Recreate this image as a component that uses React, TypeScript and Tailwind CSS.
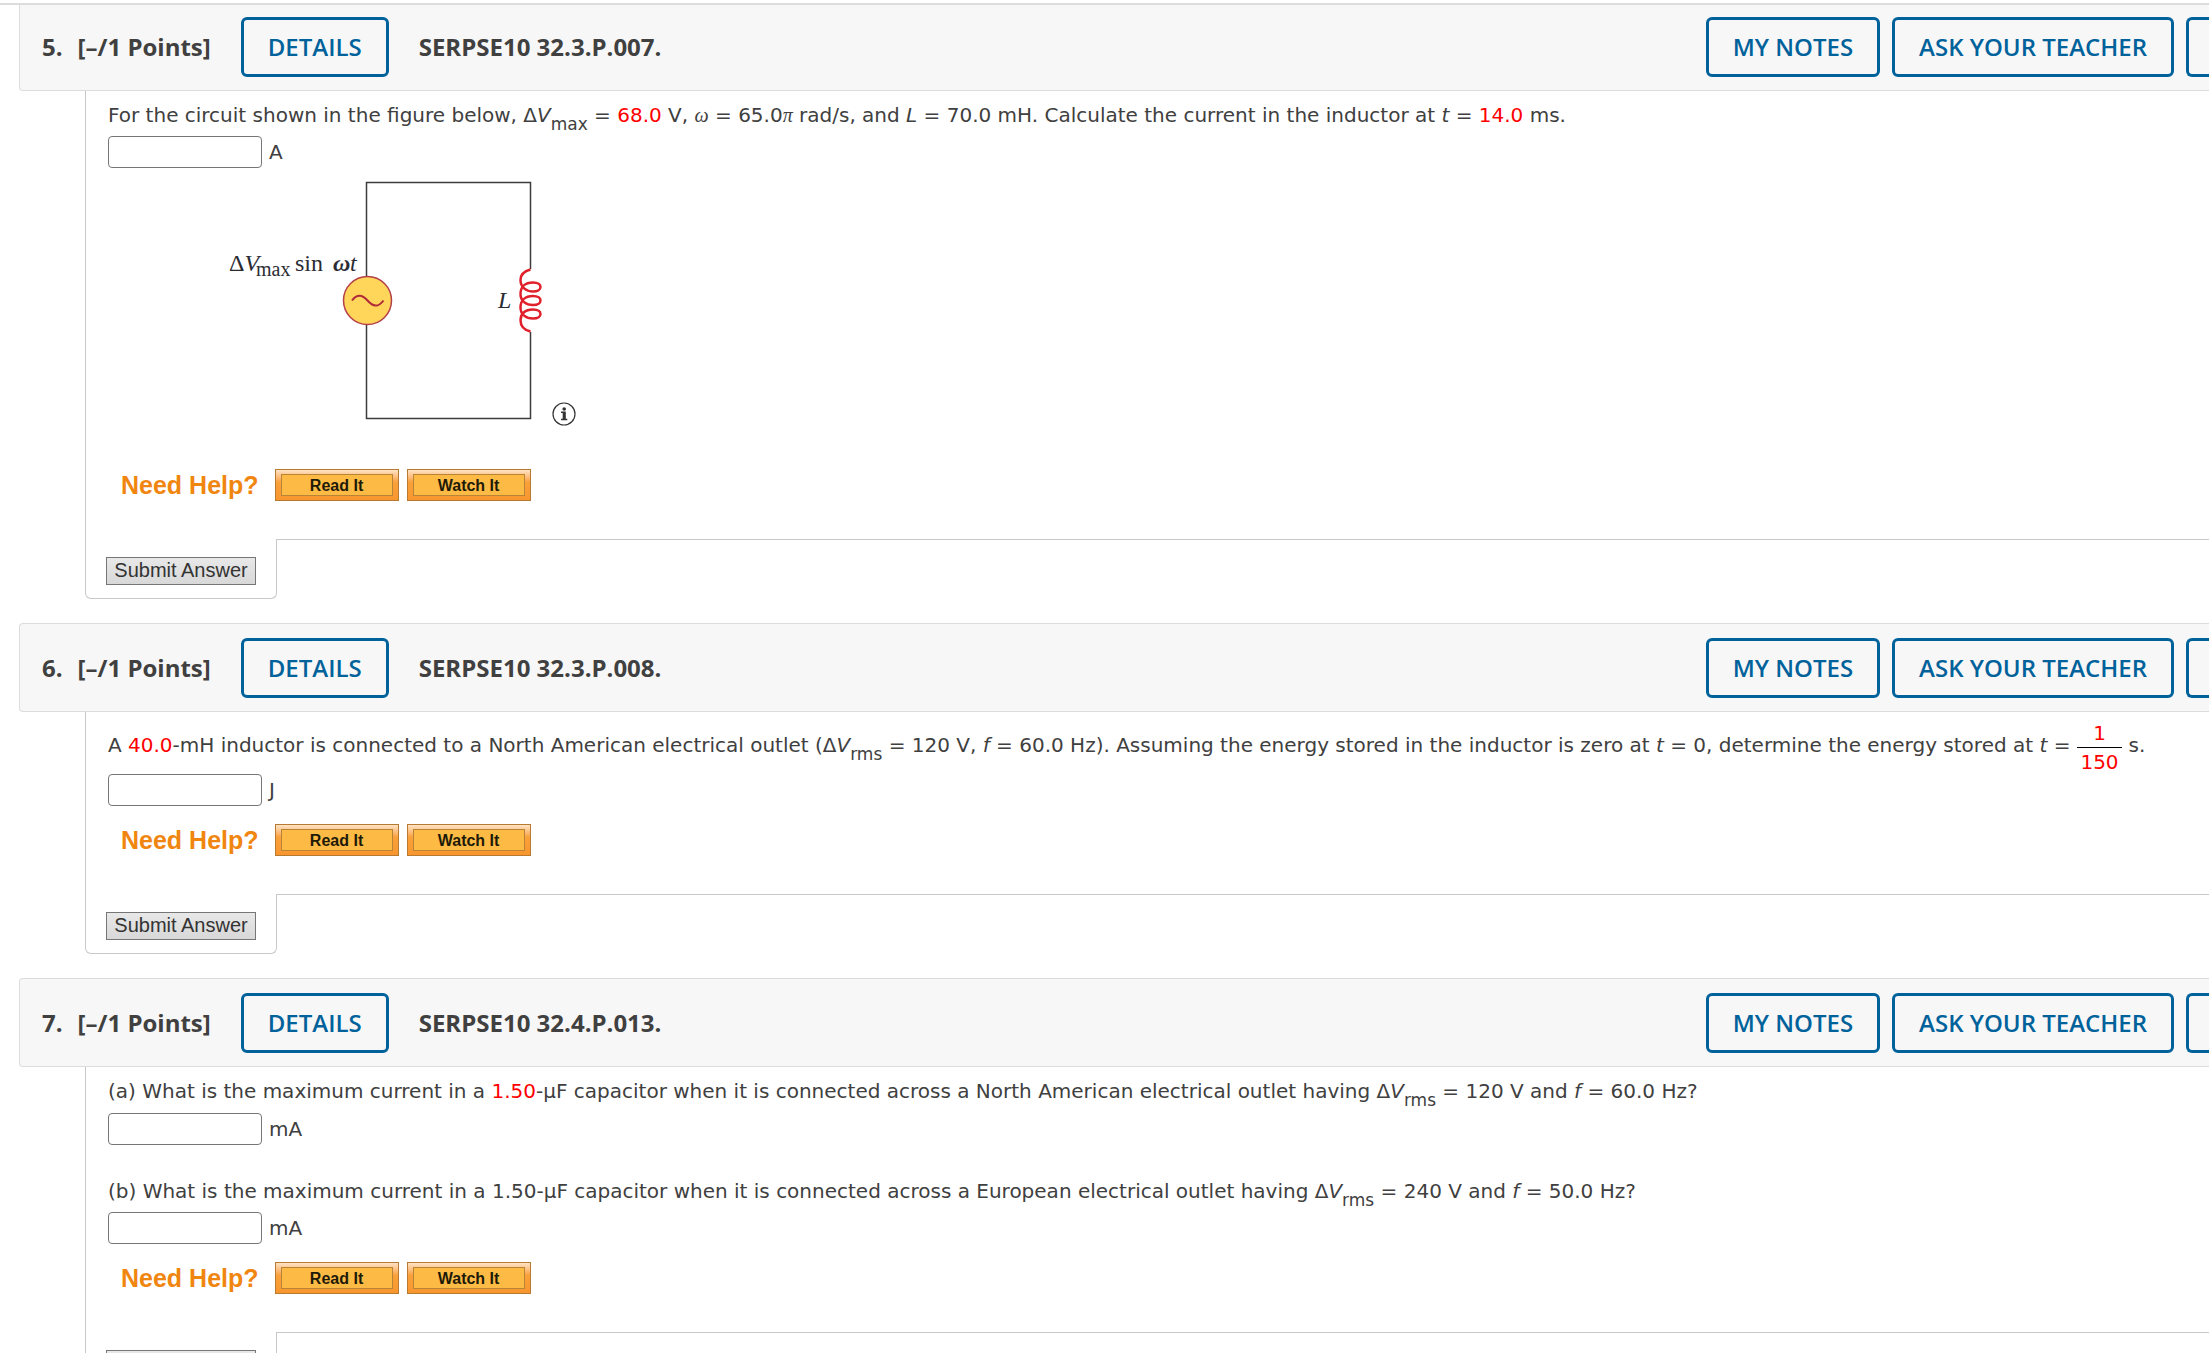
import type { ReactNode } from "react";

interface Question {
  number: number;
  code: string;
  body: ReactNode;
}

const actionClass =
  "h-[60px] rounded-md border-3 border-[#00629b] px-6 font-['Open_Sans',sans-serif] text-[24px] font-semibold text-[#00629b] whitespace-nowrap";

function Red({ children }: { children: ReactNode }) {
  return <span className="text-[#ff0000]">{children}</span>;
}

function Greek({ children }: { children: ReactNode }) {
  return (
    <i className="font-['Liberation_Serif',serif] text-[20px]">{children}</i>
  );
}

function DeltaV({ sub }: { sub: string }) {
  return (
    <>
      Δ<i>V</i>
      <span className="relative top-2 text-[17px] leading-none">{sub}</span>
    </>
  );
}

function Answer({ id, unit }: { id: string; unit: string }) {
  return (
    <div className="flex items-center gap-[7px]">
      <input
        id={id}
        type="text"
        className="h-8 w-[154px] rounded-sm border border-[#767676] bg-white px-1"
      />
      <label htmlFor={id} className="leading-8">
        {unit}
      </label>
    </div>
  );
}

function Circuit() {
  return (
    <div className="mt-[10px] flex items-end pl-[120px]">
      <svg
        width="320"
        height="248"
        viewBox="228 178 320 248"
        className="block"
        fill="none"
      >
        <path
          d="M530.5 269V182.5H366.5V418.5H530.5V332"
          stroke="#3c3c3c"
          strokeWidth="1.5"
        />
        <circle
          cx="367.5"
          cy="300.5"
          r="24"
          fill="#ffd55a"
          stroke="#b5404a"
          strokeWidth="1.5"
        />
        <path
          d="M352 300.5C357 294 362 294.500 367.500 300.500C373 306.500 378 308 383.500 300.500"
          stroke="#b02a3a"
          strokeWidth="2"
        />
        <path
          d="M530.500 269.500C523 271.500 520.500 276 520.500 280C520.500 287 526 291.500 533 291.500C543 291.500 543 282.500 533 282.500C525 282.500 520.500 287 520.500 294C520.500 301 526 305 533 305C543 305 543 296 533 296C525 296 520.500 300.500 520.500 307.500C520.500 314.500 526 318.500 533 318.500C543 318.500 543 309.500 533 309.500C525 309.500 520.500 314 520.500 320C520.500 326 524 330 530.500 331.500"
          stroke="#e0202a"
          strokeWidth="2.500"
        />
        <g
          fill="#2b2b33"
          className="font-['Liberation_Serif',serif] text-[24px]"
        >
          <text x="229" y="271">
            Δ<tspan fontStyle="italic">V</tspan>
          </text>
          <text x="256" y="276" className="text-[20px]">
            max
          </text>
          <text x="295" y="271">
            sin
          </text>
          <text x="333" y="271" fontStyle="italic" className="font-bold">
            ω
          </text>
          <text x="350" y="271" fontStyle="italic">
            t
          </text>
          <text x="498" y="308" fontStyle="italic">
            L
          </text>
        </g>
      </svg>
      <button
        type="button"
        aria-label="Figure information"
        className="ml-1 flex size-6 items-center justify-center"
      >
        <svg width="24" height="24" viewBox="0 0 24 24" fill="none">
          <circle cx="12" cy="12" r="11" stroke="#333" strokeWidth="1.2" />
          <path
            d="M9 9.500H13.800V16.800H15.300V18.300H9V16.800H10.700V11H9Z"
            fill="#333"
          />
          <circle cx="12.200" cy="7" r="1.800" fill="#333" />
        </svg>
      </button>
    </div>
  );
}

function HelpButton({ label }: { label: string }) {
  return (
    <button
      type="button"
      className="h-8 w-[124px] border border-[#b87a30] bg-linear-to-b from-[#ffe3c4] via-[#f9a13a] via-40% to-[#f8962e] p-1 font-['Liberation_Sans',sans-serif] text-[16px] font-bold text-[#1e1a08]"
    >
      <span className="mx-px flex h-full items-center justify-center border border-[#b98436] bg-[#fdbb45] pt-0.5">
        {label}
      </span>
    </button>
  );
}

function NeedHelp() {
  return (
    <div className="mt-[18px] flex items-center pl-[13px]">
      <span className="mr-4 font-['Liberation_Sans',sans-serif] text-[25px] leading-8 font-bold text-[#f0860f]">
        Need Help?
      </span>
      <div className="flex gap-2">
        <HelpButton label="Read It" />
        <HelpButton label="Watch It" />
      </div>
    </div>
  );
}

const questions: Question[] = [
  {
    number: 5,
    code: "SERPSE10 32.3.P.007.",
    body: (
      <>
        <p className="pt-[6px] pb-[3px]">
          For the circuit shown in the figure below, <DeltaV sub="max" /> ={" "}
          <Red>68.0</Red> V, <Greek>ω</Greek> = 65.0<Greek>π</Greek> rad/s, and{" "}
          <i>L</i> = 70.0 mH. Calculate the current in the inductor at{" "}
          <i>t</i> = <Red>14.0</Red> ms.
        </p>
        <Answer id="q5" unit="A" />
        <Circuit />
        <div className="h-[25px]" />
      </>
    ),
  },
  {
    number: 6,
    code: "SERPSE10 32.3.P.008.",
    body: (
      <>
        <p className="flex items-start pt-[7px]">
          <span className="mt-2">
            A <Red>40.0</Red>-mH inductor is connected to a North American
            electrical outlet (<DeltaV sub="rms" /> = 120 V, <i>f</i> = 60.0
            Hz). Assuming the energy stored in the inductor is zero at{" "}
            <i>t</i> = 0, determine the energy stored at <i>t</i> =
          </span>
          <span className="mx-[7px] flex flex-col text-center text-[#ff0000]">
            <span className="border-b border-black px-1 leading-7">1</span>
            <span className="px-[3px] pt-0.5 leading-6">150</span>
          </span>
          <span className="mt-2">s.</span>
        </p>
        <Answer id="q6" unit="J" />
      </>
    ),
  },
  {
    number: 7,
    code: "SERPSE10 32.4.P.013.",
    body: (
      <>
        <p className="pt-[6px] pb-1">
          (a) What is the maximum current in a <Red>1.50</Red>-µF capacitor
          when it is connected across a North American electrical outlet having{" "}
          <DeltaV sub="rms" /> = 120 V and <i>f</i> = 60.0 Hz?
        </p>
        <Answer id="q7a" unit="mA" />
        <p className="pt-7 pb-[3px]">
          (b) What is the maximum current in a 1.50-µF capacitor when it is
          connected across a European electrical outlet having{" "}
          <DeltaV sub="rms" /> = 240 V and <i>f</i> = 50.0 Hz?
        </p>
        <Answer id="q7b" unit="mA" />
      </>
    ),
  },
];

function QuestionHeader({ number, code }: Omit<Question, "body">) {
  return (
    <header className="flex h-[89px] items-center rounded-l-sm border border-r-0 border-[#dcdcdc] bg-[#f7f7f7] pl-[22px] font-['Open_Sans',sans-serif] text-[24px] font-bold text-[#404040]">
      <h2 className="flex gap-[15px] whitespace-nowrap">
        <span>{number}.</span>
        <span>[–/1 Points]</span>
      </h2>
      <button type="button" className={`${actionClass} ml-[30px]`}>
        DETAILS
      </button>
      <span className="ml-[30px] whitespace-nowrap">{code}</span>
      <div className="ml-auto flex gap-3">
        <button type="button" className={actionClass}>
          MY NOTES
        </button>
        <button type="button" className={actionClass}>
          ASK YOUR TEACHER
        </button>
        <button
          type="button"
          aria-label="Practice another"
          className="h-[60px] w-[23px] rounded-l-md border-3 border-r-0 border-[#00629b]"
        />
      </div>
    </header>
  );
}

function QuestionSection({ number, code, body }: Question) {
  return (
    <section className="mb-6">
      <QuestionHeader number={number} code={code} />
      <div className="ml-[66px]">
        <div className="border-l border-[#c8c8c8] pb-[38px] pl-[22px]">
          {body}
          <NeedHelp />
        </div>
        <div className="flex">
          <div className="rounded-b-md border border-t-0 border-[#c8c8c8] px-5 pt-[18px] pb-[13px]">
            <button
              type="button"
              className="block h-7 w-[150px] border border-[#767676] bg-linear-to-b from-[#e8e8e8] to-[#d8d8d8] pb-0.5 font-['Liberation_Sans',sans-serif] text-[20px] leading-none whitespace-nowrap text-[#333]"
            >
              Submit Answer
            </button>
          </div>
          <div className="flex-1 border-t border-[#c8c8c8]" />
        </div>
      </div>
    </section>
  );
}

export default function App() {
  return (
    <main className="min-h-screen bg-white pt-0.5 font-['DejaVu_Sans',Verdana,sans-serif] text-[20px] leading-9 text-[#404040]">
      <div className="relative z-10 h-[3px] border-t border-white bg-[#dcdcdc]" />
      <div className="-mt-[3px] pl-[19px]">
        {questions.map((question) => (
          <QuestionSection key={question.number} {...question} />
        ))}
      </div>
    </main>
  );
}
